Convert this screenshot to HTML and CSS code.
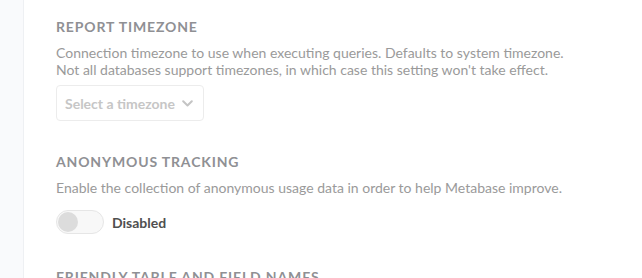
FILE: index.html
```html
<!DOCTYPE html>
<html>
<head>
<meta charset="utf-8">
<link rel="stylesheet" href="styles.css">
</head>
<body>
<div class="layout">
  <aside class="sidebar"></aside>
  <main class="main">
    <section class="setting">
      <h2 class="setting-title">Report Timezone</h2>
      <p class="setting-desc">Connection timezone to use when executing queries. Defaults to system timezone.<br>Not all databases support timezones, in which case this setting won't take effect.</p>
      <div class="select">
        <span class="select-label">Select a timezone</span>
        <svg class="chevron" width="11" height="7" viewBox="0 0 11 7"><path d="M1.2 1.2 L5.5 5.5 L9.8 1.2" fill="none" stroke="#c4c4c4" stroke-width="2" stroke-linecap="round" stroke-linejoin="round"/></svg>
      </div>
    </section>
    <section class="setting">
      <h2 class="setting-title">Anonymous Tracking</h2>
      <p class="setting-desc">Enable the collection of anonymous usage data in order to help Metabase improve.</p>
      <div class="toggle-row">
        <span class="toggle"><span class="knob"></span></span>
        <span class="toggle-label">Disabled</span>
      </div>
    </section>
    <section class="setting">
      <h2 class="setting-title">Friendly Table and Field Names</h2>
    </section>
  </main>
</div>
</body>
</html>
```
FILE: styles.css
```css
html, body {
  margin: 0;
  padding: 0;
  background: #ffffff;
  font-family: Lato, "Open Sans", sans-serif;
  overflow: hidden;
}
.layout {
  display: flex;
  height: 278px;
}
.sidebar {
  width: 23px;
  flex: none;
  background: #f9fafc;
  border-right: 1px solid #eef0f3;
}
.main {
  flex: 1;
  padding: 18px 0 0 32px;
}
.setting {
  margin-bottom: 32px;
}
.setting + .setting {
  margin-bottom: 34px;
}
.setting-title {
  margin: 0 0 8px 0;
  font-size: 14px;
  line-height: 18px;
  font-weight: 700;
  text-transform: uppercase;
  letter-spacing: 0.85px;
  color: #8f9094;
}
.setting-desc {
  margin: 0;
  font-size: 14px;
  line-height: 17px;
  color: #9a9a9a;
}
.select {
  margin-top: 7px;
  display: inline-flex;
  align-items: center;
  box-sizing: border-box;
  height: 36px;
  padding: 0 10px 0 8px;
  border: 1px solid #ececec;
  border-radius: 4px;
  gap: 7px;
}
.select-label {
  font-size: 14px;
  font-weight: 700;
  color: #c6c6c6;
}
.chevron {
  display: block;
}
.toggle-row {
  margin-top: 14px;
  display: flex;
  align-items: center;
  gap: 8px;
}
.toggle {
  box-sizing: border-box;
  width: 48px;
  height: 24px;
  border-radius: 12px;
  border: 1px solid #e6e6e6;
  background: #f8f8f8;
  display: flex;
  align-items: center;
  padding-left: 1px;
}
.knob {
  width: 20px;
  height: 20px;
  border-radius: 50%;
  background: #dcdcdc;
}
.toggle-label {
  font-size: 14px;
  font-weight: 700;
  color: #4f4f4f;
}
```
